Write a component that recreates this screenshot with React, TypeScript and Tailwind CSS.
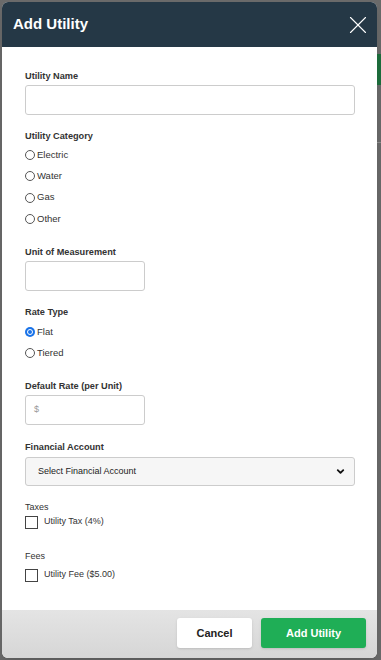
import { X, ChevronDown } from 'lucide-react';

const categories = ['Electric', 'Water', 'Gas', 'Other'];
const rateTypes = ['Flat', 'Tiered'];

function Label({ children }: { children: React.ReactNode }) {
    return <div className="text-[9.2px] font-bold text-[#333] leading-[12px]">{children}</div>;
}

function Radio({ label, checked }: { label: string; checked?: boolean }) {
    return (
        <label className="flex items-center h-[12px] text-[9.5px] text-[#333]">
            {checked ? (
                <span className="w-[10px] h-[10px] rounded-full bg-[#1a73e8] flex items-center justify-center">
                    <span className="w-[6px] h-[6px] rounded-full border-[1.5px] border-white bg-[#1a73e8]" />
                </span>
            ) : (
                <span className="w-[10px] h-[10px] rounded-full border border-[#555] bg-white" />
            )}
            <span className="ml-[2px]">{label}</span>
        </label>
    );
}

function Checkbox({ label }: { label: string }) {
    return (
        <div className="flex items-start">
            <span className="w-[13px] h-[13px] border border-[#444] bg-white" />
            <span className="ml-[6px] -mt-[1px] text-[9px] text-[#333]">{label}</span>
        </div>
    );
}

export default function App() {
    return (
        <div className="flex h-[660px] w-[381px] bg-[#6a6a6a] overflow-hidden" style={{ fontFamily: '"Liberation Sans", Arial, sans-serif' }}>
            <div className="w-[2px] shrink-0" />
            <div className="w-[375px] shrink-0 mt-[2px] h-[656px] bg-white rounded-[6px] overflow-hidden flex flex-col shadow-lg">
                <div className="h-[45px] bg-[#253846] flex items-center justify-between pl-[11px] pr-[4px]">
                    <h1 className="text-[15px] font-bold text-white">Add Utility</h1>
                    <X className="w-[30px] h-[30px] text-white" strokeWidth={0.9} />
                </div>

                <div className="flex-1 px-[23px] pt-[23px]">
                    <Label>Utility Name</Label>
                    <div className="mt-[3px] h-[30px] w-[330px] border border-[#ccc] rounded-[3px]" />

                    <div className="mt-[15px]"><Label>Utility Category</Label></div>
                    <div className="mt-[7px] flex flex-col gap-[9.3px]">
                        {categories.map((c) => <Radio key={c} label={c} />)}
                    </div>

                    <div className="mt-[21px]"><Label>Unit of Measurement</Label></div>
                    <div className="mt-[3px] h-[30px] w-[120px] border border-[#ccc] rounded-[3px]" />

                    <div className="mt-[15px]"><Label>Rate Type</Label></div>
                    <div className="mt-[8px] flex flex-col gap-[9.3px]">
                        {rateTypes.map((r, i) => <Radio key={r} label={r} checked={i === 0} />)}
                    </div>

                    <div className="mt-[21px]"><Label>Default Rate (per Unit)</Label></div>
                    <div className="mt-[3px] h-[30px] w-[120px] border border-[#ccc] rounded-[3px] flex items-center pl-[8px] text-[9px] text-[#999]">$</div>

                    <div className="mt-[16px]"><Label>Financial Account</Label></div>
                    <div className="mt-[4px] h-[29px] w-[330px] border border-[#ccc] rounded-[3px] bg-[#f6f6f6] flex items-center justify-between pl-[12px] pr-[8px]">
                        <span className="text-[9px] text-[#222]">Select Financial Account</span>
                        <ChevronDown className="w-[11px] h-[11px] text-[#111]" strokeWidth={4} />
                    </div>

                    <div className="mt-[15px] text-[9px] text-[#333] leading-[12px]">Taxes</div>
                    <div className="mt-[3px]"><Checkbox label="Utility Tax (4%)" /></div>

                    <div className="mt-[21px] text-[9px] text-[#333] leading-[12px]">Fees</div>
                    <div className="mt-[7px]"><Checkbox label="Utility Fee ($5.00)" /></div>
                </div>

                <div className="h-[48px] bg-gradient-to-b from-[#e4e4e4] to-[#d6d6d6] flex items-center justify-end gap-[9px] pr-[11px] pb-[2px]">
                    <button className="w-[75px] h-[30px] bg-white rounded-[3px] shadow-sm text-[11px] font-bold text-[#222]">Cancel</button>
                    <button className="w-[105px] h-[30px] bg-[#1fae56] rounded-[3px] shadow-sm text-[11px] font-bold text-white">Add Utility</button>
                </div>
            </div>
            <div className="flex-1 flex flex-col">
                <div className="mt-[54px] h-[31px] bg-[#1c6b3b]" />
                <div className="mt-[57px] h-px bg-[#8a8a8a]" />
            </div>
        </div>
    );
}
